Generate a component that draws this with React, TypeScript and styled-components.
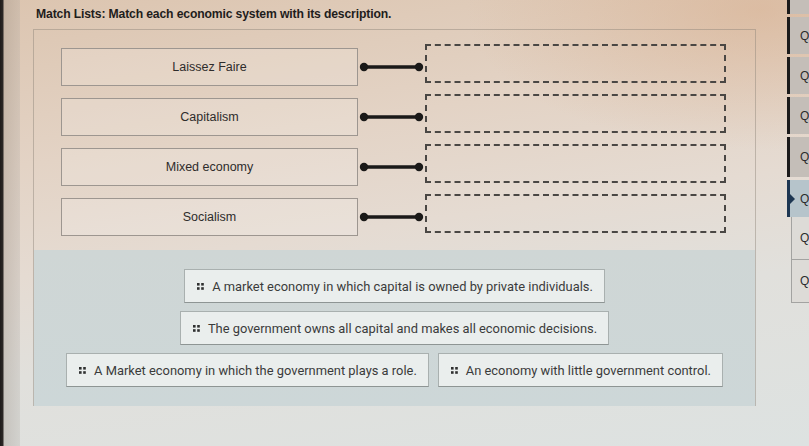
import styled, { createGlobalStyle } from 'styled-components'

const GlobalStyle = createGlobalStyle`
  html, body {
    margin: 0;
    padding: 0;
    overflow: hidden;
  }
  body {
    font-family: 'Liberation Sans', Arial, sans-serif;
  }
`

const systems = ['Laissez Faire', 'Capitalism', 'Mixed economy', 'Socialism']

const descriptions = [
  'A market economy in which capital is owned by private individuals.',
  'The government owns all capital and makes all economic decisions.',
  'A Market economy in which the government plays a role.',
  'An economy with little government control.',
]

type NavState = 'answered' | 'current' | 'open'

const navItems: { state: NavState; height: number }[] = [
  { state: 'answered', height: 14 },
  { state: 'answered', height: 37 },
  { state: 'answered', height: 37 },
  { state: 'answered', height: 37 },
  { state: 'answered', height: 40 },
  { state: 'current', height: 37 },
  { state: 'open', height: 43 },
  { state: 'open', height: 43 },
]

const Screen = styled.div`
  display: flex;
  width: 809px;
  height: 446px;
  overflow: hidden;
  background:
    radial-gradient(ellipse 420px 200px at 760px 10px, rgba(214, 170, 135, 0.5), transparent 70%),
    linear-gradient(172deg, #dcc5b0 0%, #e3d3c5 30%, #e5dbd2 50%, #e1e0dc 68%, #dde2e1 100%);
`

const Bezel = styled.div`
  flex: none;
  width: 20px;
  background: linear-gradient(90deg, #1e1b1a 0px, #2c2826 3px, rgba(150, 140, 130, 0.35) 4px, rgba(170, 165, 160, 0.25) 20px);
`

const Main = styled.div`
  flex: none;
  width: 736px;
  padding-left: 13px;
  box-sizing: border-box;
`

const Title = styled.div`
  padding: 7px 0 0 3px;
  height: 29px;
  box-sizing: border-box;
  font-size: 12.2px;
  font-weight: bold;
  color: #1f1d1c;
  letter-spacing: -0.15px;
`

const Panel = styled.div`
  width: 723px;
  border: 1px solid rgba(140, 130, 120, 0.45);
  border-bottom: none;
  box-sizing: border-box;
`

const MatchArea = styled.div`
  display: flex;
  flex-direction: column;
  gap: 12px;
  padding: 18px 0 14px 27px;
`

const Row = styled.div`
  display: flex;
  align-items: center;
  height: 38px;
`

const Term = styled.div`
  width: 297px;
  height: 38px;
  box-sizing: border-box;
  display: flex;
  align-items: center;
  justify-content: center;
  border: 1px solid #9d9690;
  background: rgba(255, 255, 255, 0.16);
  font-size: 12.5px;
  color: #2e2c2b;
`

const Connector = styled.svg`
  flex: none;
  width: 67px;
  height: 12px;
`

const DropSlot = styled.div`
  width: 301px;
  height: 39px;
  margin-bottom: 7px;
  box-sizing: border-box;
  border: 2px dashed #4a4744;
`

const Bank = styled.div`
  display: flex;
  flex-wrap: wrap;
  justify-content: center;
  gap: 8px 9px;
  padding: 19px 20px 19px;
  background: linear-gradient(180deg, #cfd6d5 0%, #cdd7d8 100%);
`

const Chip = styled.div`
  display: flex;
  align-items: center;
  gap: 8px;
  height: 34px;
  padding: 0 11px 0 12px;
  box-sizing: border-box;
  background: #eaeeed;
  border: 1px solid #a9b0af;
  border-bottom-color: #8e9594;
  font-family: Roboto, 'Liberation Sans', sans-serif;
  font-size: 12.9px;
  color: #3a3b3b;
  white-space: nowrap;
`

const Sidebar = styled.div`
  flex: none;
  margin-left: auto;
  width: 23px;
  display: flex;
  flex-direction: column;
  gap: 3px;
  align-self: flex-start;
`

const NavItem = styled.div<{ $state: NavState; $h: number }>`
  position: relative;
  height: ${p => p.$h}px;
  box-sizing: border-box;
  display: flex;
  align-items: center;
  overflow: hidden;
  font-family: 'Liberation Sans', Arial, sans-serif;
  font-size: 12px;
  color: #2b2b2b;
  padding-left: ${p => (p.$state === 'open' ? 8 : 10)}px;
  margin-left: ${p => (p.$state === 'open' ? 5 : 1)}px;
  background: ${p =>
    p.$state === 'answered' ? '#c4beb8' : p.$state === 'current' ? '#b6c4cb' : '#dddbd7'};
  border-left: ${p =>
    p.$state === 'answered'
      ? '3px solid #1b1a1a'
      : p.$state === 'current'
        ? '3px solid #1d3652'
        : '1px solid #a3a3a1'};
  ${p => (p.$state === 'open' ? 'margin-top: -3px; border-bottom: 1px solid #a3a3a1;' : '')}

  ${p =>
    p.$state === 'current' &&
    `
    &::before {
      content: '';
      position: absolute;
      left: 0;
      top: 50%;
      margin-top: -5px;
      border-top: 5px solid transparent;
      border-bottom: 5px solid transparent;
      border-left: 5px solid #1d3652;
    }
  `}
`

const Handle = () => (
  <svg width="7" height="7" viewBox="0 0 7 7">
    <rect x="0" y="0" width="2.6" height="2.6" fill="#2f3030" />
    <rect x="4.2" y="0" width="2.6" height="2.6" fill="#2f3030" />
    <rect x="0" y="4.2" width="2.6" height="2.6" fill="#2f3030" />
    <rect x="4.2" y="4.2" width="2.6" height="2.6" fill="#2f3030" />
  </svg>
)

const Link = () => (
  <Connector viewBox="0 0 67 12">
    <line x1="6" y1="6" x2="61" y2="6" stroke="#1a1918" strokeWidth="3.4" />
    <circle cx="6" cy="6" r="4.2" fill="#1a1918" />
    <circle cx="61" cy="6" r="4.2" fill="#1a1918" />
  </Connector>
)

export default function App() {
  return (
    <>
      <GlobalStyle />
      <Screen>
        <Bezel />
        <Main>
          <Title>Match Lists: Match each economic system with its description.</Title>
          <Panel>
            <MatchArea>
              {systems.map(name => (
                <Row key={name}>
                  <Term>{name}</Term>
                  <Link />
                  <DropSlot />
                </Row>
              ))}
            </MatchArea>
            <Bank>
              {descriptions.map(text => (
                <Chip key={text}>
                  <Handle />
                  {text}
                </Chip>
              ))}
            </Bank>
          </Panel>
        </Main>
        <Sidebar>
          {navItems.map((item, i) => (
            <NavItem key={i} $state={item.state} $h={item.height}>
              {i === 0 ? '' : 'Q'}
            </NavItem>
          ))}
        </Sidebar>
      </Screen>
    </>
  )
}
